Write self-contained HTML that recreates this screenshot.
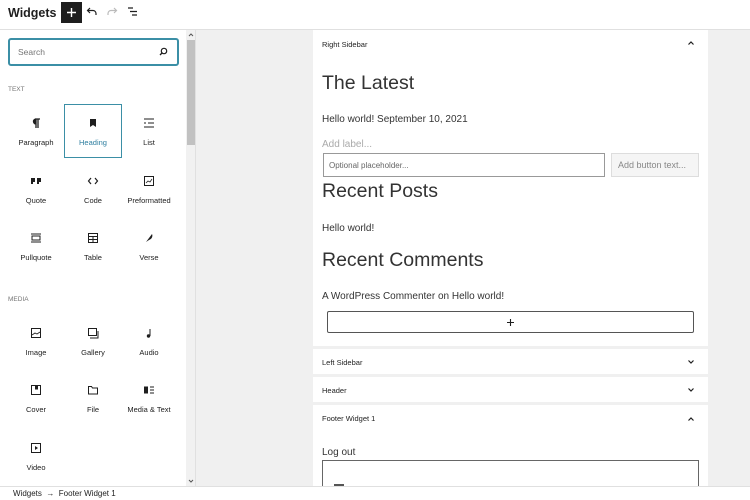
<!DOCTYPE html>
<html><head><meta charset="utf-8"><style>
*{margin:0;padding:0;box-sizing:border-box}
body{width:750px;height:500px;overflow:hidden;background:#f0f0f0;font-family:"Liberation Sans",sans-serif;color:#1e1e1e;position:relative}
.a{position:absolute}
.top{left:0;top:0;width:750px;height:30px;background:#fff;border-bottom:1px solid #e0e0e0}
.left{left:0;top:30px;width:186px;height:456px;background:#fff}
.sb{left:186px;top:30px;width:10px;height:456px;background:#f1f1f1;border-right:1px solid #e0e0e0}
.thumb{left:187px;top:40px;width:8px;height:105px;background:#c1c1c1}
.it{position:absolute;width:56px;text-align:center;font-size:7.5px;color:#1e1e1e}
.it svg{display:block;margin:0 auto}
.it .lb{margin-top:9px}
.main{left:313px;top:30px;width:395px;height:456px;background:#fff}
.sep{position:absolute;left:313px;width:395px;height:3px;background:#f0f0f0}
.bottom{left:0;top:486px;width:750px;height:14px;background:#fff;border-top:1px solid #e0e0e0;font-size:8px;padding:2px 0 0 13px;color:#1e1e1e}
h{position:absolute;left:322px;font-size:19.5px;color:#333;font-weight:normal}
</style></head><body>
<div class="a top"></div>
<div class="a" style="left:8px;top:6px;font-size:12.5px;font-weight:bold">Widgets</div>
<div class="a" style="left:61px;top:2px;width:21px;height:21px;background:#1e1e1e"></div>
<svg class="a" style="left:65px;top:6px" width="13" height="13" viewBox="0 0 13 13"><path d="M6.5 2v9M2 6.5h9" stroke="#fff" stroke-width="1.4"/></svg>
<svg class="a" style="left:86px;top:6px" width="12" height="12" viewBox="0 0 12 12"><path d="M4 2L1.5 4.5 4 7M1.5 4.5H7a3 3 0 013 3V9" fill="none" stroke="#1e1e1e" stroke-width="1.2"/></svg>
<svg class="a" style="left:106px;top:6px" width="12" height="12" viewBox="0 0 12 12"><path d="M8 2l2.5 2.5L8 7M10.5 4.5H5a3 3 0 00-3 3V9" fill="none" stroke="#bbb" stroke-width="1.2"/></svg>
<svg class="a" style="left:127px;top:6px" width="12" height="12" viewBox="0 0 12 12"><path d="M1 2h5M3 5.5h7M5 9h5" stroke="#1e1e1e" stroke-width="1.2"/></svg>
<div class="a left"></div>
<div class="a sb"></div><div class="a thumb"></div>
<svg class="a" style="left:187px;top:32px" width="8" height="6" viewBox="0 0 8 6"><path d="M2 4l2-2 2 2" fill="none" stroke="#555"/></svg>
<svg class="a" style="left:187px;top:478px" width="8" height="6" viewBox="0 0 8 6"><path d="M2 2l2 2 2-2" fill="none" stroke="#555"/></svg>
<div class="a" style="left:8px;top:38px;width:171px;height:28px;border:2px solid #3b8fa6;border-radius:3px;font-size:8.5px;color:#757575;padding:7px 0 0 8px">Search</div>
<svg class="a" style="left:159px;top:47px" width="9" height="9" viewBox="0 0 9 9"><circle cx="5" cy="4" r="2.7" fill="none" stroke="#1e1e1e" stroke-width="1.2"/><path d="M3 6L1 8" stroke="#1e1e1e" stroke-width="1.3"/></svg>
<div class="a" style="left:8px;top:86px;font-size:6.5px;color:#757575">TEXT</div>
<div class="a" style="left:64px;top:104px;width:58px;height:54px;border:1px solid #3b8fa6"></div>
<div class="it" style="left:8px;top:117px"><svg width="12" height="12" viewBox="0 0 12 12"><path d="M5 2h5M6 2v9M8 2v9M6 2a2.5 2.5 0 000 5" fill="#1e1e1e" stroke="#1e1e1e" stroke-width="1.3"/></svg><div class="lb">Paragraph</div></div>
<div class="it" style="left:65px;top:117px;color:#2f7fa0"><svg width="12" height="12" viewBox="0 0 12 12"><path d="M3 2h6v8L6 8 3 10z" fill="#1e1e1e"/></svg><div class="lb">Heading</div></div>
<div class="it" style="left:121px;top:117px"><svg width="12" height="12" viewBox="0 0 12 12"><path d="M1 2h10M1 6h2M5 6h6M1 10h10" stroke="#1e1e1e" stroke-width="1.1"/></svg><div class="lb">List</div></div>
<div class="it" style="left:8px;top:175px"><svg width="12" height="12" viewBox="0 0 12 12"><path d="M1 3h4v4H3v2H1zM7 3h4v4H9v2H7z" fill="#1e1e1e"/></svg><div class="lb">Quote</div></div>
<div class="it" style="left:65px;top:175px"><svg width="12" height="12" viewBox="0 0 12 12"><path d="M4 3L1.5 6 4 9M8 3l2.5 3L8 9" fill="none" stroke="#1e1e1e" stroke-width="1.2"/></svg><div class="lb">Code</div></div>
<div class="it" style="left:121px;top:175px"><svg width="12" height="12" viewBox="0 0 12 12"><rect x="1.5" y="1.5" width="9" height="9" fill="none" stroke="#1e1e1e"/><path d="M3 8l2-2 2 1 2-3" fill="none" stroke="#1e1e1e" stroke-width=".8"/></svg><div class="lb">Preformatted</div></div>
<div class="it" style="left:8px;top:232px"><svg width="12" height="12" viewBox="0 0 12 12"><path d="M1 2h10M1 10h10" stroke="#1e1e1e"/><rect x="2" y="4" width="8" height="4" fill="none" stroke="#1e1e1e"/></svg><div class="lb">Pullquote</div></div>
<div class="it" style="left:65px;top:232px"><svg width="12" height="12" viewBox="0 0 12 12"><rect x="1.5" y="1.5" width="9" height="9" fill="none" stroke="#1e1e1e"/><path d="M1.5 4.5h9M1.5 7.5h9M6 4.5v6" stroke="#1e1e1e"/></svg><div class="lb">Table</div></div>
<div class="it" style="left:121px;top:232px"><svg width="12" height="12" viewBox="0 0 12 12"><path d="M3 10L9 2c1 2 0 5-3 6z" fill="#1e1e1e"/></svg><div class="lb">Verse</div></div>
<div class="a" style="left:8px;top:296px;font-size:6.5px;color:#757575">MEDIA</div>
<div class="it" style="left:8px;top:327px"><svg width="12" height="12" viewBox="0 0 12 12"><rect x="1.5" y="1.5" width="9" height="9" fill="none" stroke="#1e1e1e"/><path d="M2 8l3-2 2 1 3-2" fill="none" stroke="#1e1e1e" stroke-width=".9"/></svg><div class="lb">Image</div></div>
<div class="it" style="left:65px;top:327px"><svg width="12" height="12" viewBox="0 0 12 12"><rect x="1.5" y="1.5" width="8" height="7" fill="none" stroke="#1e1e1e"/><path d="M3 11h8V4" fill="none" stroke="#1e1e1e"/></svg><div class="lb">Gallery</div></div>
<div class="it" style="left:121px;top:327px"><svg width="12" height="12" viewBox="0 0 12 12"><path d="M7 2v7" stroke="#1e1e1e"/><circle cx="5.5" cy="9" r="1.7" fill="#1e1e1e"/></svg><div class="lb">Audio</div></div>
<div class="it" style="left:8px;top:384px"><svg width="12" height="12" viewBox="0 0 12 12"><rect x="1.5" y="1.5" width="9" height="9" fill="none" stroke="#1e1e1e"/><rect x="5" y="1.5" width="3" height="4" fill="#1e1e1e"/></svg><div class="lb">Cover</div></div>
<div class="it" style="left:65px;top:384px"><svg width="12" height="12" viewBox="0 0 12 12"><path d="M1.5 2.5h3l1 1.5h5v6h-9z" fill="none" stroke="#1e1e1e"/></svg><div class="lb">File</div></div>
<div class="it" style="left:121px;top:384px"><svg width="12" height="12" viewBox="0 0 12 12"><rect x="1" y="2.5" width="4" height="7" fill="#1e1e1e"/><path d="M7 3h4M7 6h4M7 9h4" stroke="#1e1e1e"/></svg><div class="lb">Media &amp; Text</div></div>
<div class="it" style="left:8px;top:442px"><svg width="12" height="12" viewBox="0 0 12 12"><rect x="1.5" y="1.5" width="9" height="9" fill="none" stroke="#1e1e1e"/><path d="M5 4v4l3-2z" fill="#1e1e1e"/></svg><div class="lb">Video</div></div>
<div class="a main"></div>
<div class="a" style="left:322px;top:40px;font-size:7.5px">Right Sidebar</div>
<svg class="a" style="left:687px;top:40px" width="8" height="6" viewBox="0 0 8 6"><path d="M1.5 4.5L4 2l2.5 2.5" fill="none" stroke="#1e1e1e" stroke-width="1.2"/></svg>
<h style="top:72px">The Latest</h>
<div class="a" style="left:322px;top:114px;font-size:10px;color:#333">Hello world! September 10, 2021</div>
<div class="a" style="left:322px;top:139px;font-size:10px;color:#aaa">Add label...</div>
<div class="a" style="left:323px;top:153px;width:282px;height:24px;border:1px solid #999;font-size:8px;color:#666;padding:7px 0 0 5px">Optional placeholder...</div>
<div class="a" style="left:611px;top:153px;width:88px;height:24px;border:1px solid #ddd;background:#f5f5f5;font-size:9px;color:#888;padding:6px 0 0 6px">Add button text...</div>
<h style="top:180px">Recent Posts</h>
<div class="a" style="left:322px;top:223px;font-size:10px;color:#333">Hello world!</div>
<h style="top:249px">Recent Comments</h>
<div class="a" style="left:322px;top:291px;font-size:10px;color:#333">A WordPress Commenter on Hello world!</div>
<div class="a" style="left:327px;top:311px;width:367px;height:22px;border:1px solid #555;border-radius:2px"></div>
<svg class="a" style="left:506px;top:318px" width="9" height="9" viewBox="0 0 9 9"><path d="M4.5 1v7M1 4.5h7" stroke="#1e1e1e" stroke-width="1.1"/></svg>
<div class="sep" style="top:346px"></div>
<div class="a" style="left:322px;top:358px;font-size:7.5px">Left Sidebar</div>
<svg class="a" style="left:687px;top:359px" width="8" height="6" viewBox="0 0 8 6"><path d="M1.5 1.5L4 4l2.5-2.5" fill="none" stroke="#1e1e1e" stroke-width="1.2"/></svg>
<div class="sep" style="top:374px"></div>
<div class="a" style="left:322px;top:386px;font-size:7.5px">Header</div>
<svg class="a" style="left:687px;top:387px" width="8" height="6" viewBox="0 0 8 6"><path d="M1.5 1.5L4 4l2.5-2.5" fill="none" stroke="#1e1e1e" stroke-width="1.2"/></svg>
<div class="sep" style="top:402px"></div>
<div class="a" style="left:322px;top:414px;font-size:7.5px">Footer Widget 1</div>
<svg class="a" style="left:687px;top:416px" width="8" height="6" viewBox="0 0 8 6"><path d="M1.5 4.5L4 2l2.5 2.5" fill="none" stroke="#1e1e1e" stroke-width="1.2"/></svg>
<div class="a" style="left:322px;top:447px;font-size:10px;color:#333">Log out</div>
<div class="a" style="left:322px;top:460px;width:377px;height:30px;border:1px solid #666"></div>
<div class="a" style="left:334px;top:484px;width:10px;height:2px;background:#555"></div>
<div class="a bottom">Widgets &nbsp;→&nbsp; Footer Widget 1</div>
</body></html>
